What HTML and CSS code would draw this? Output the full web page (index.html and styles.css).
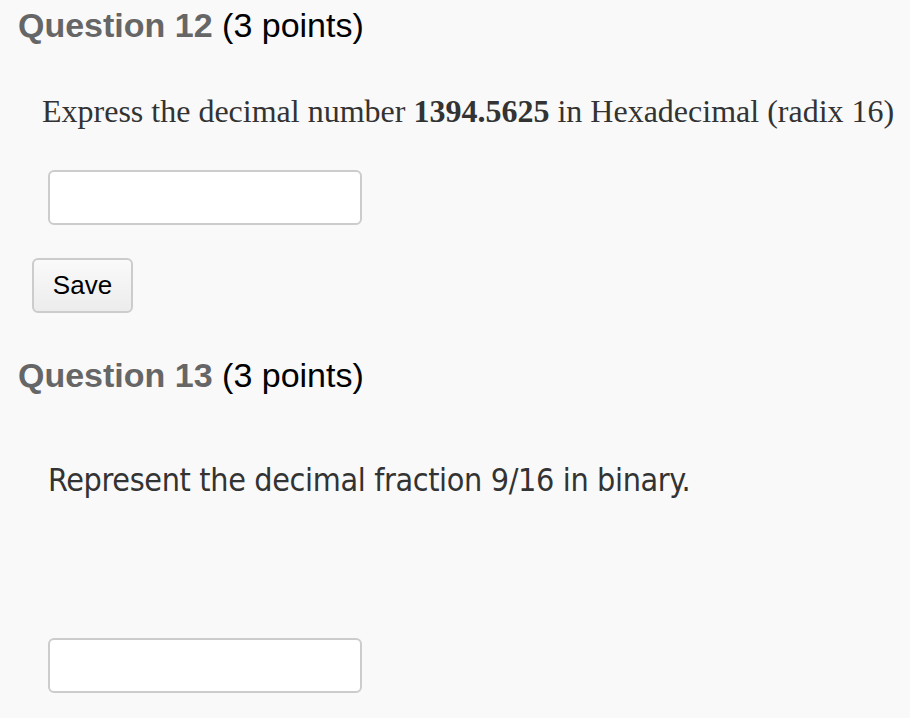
FILE: index.html
```html
<!DOCTYPE html>
<html lang="en">
<head>
  <meta charset="UTF-8">
  <meta name="viewport" content="width=device-width, initial-scale=1.0">
  <title>Quiz</title>
  <link rel="stylesheet" href="styles.css">
</head>
<body>
  <div class="quiz">
    <div class="question">
      <h2 class="q-title"><span class="q-num">Question 12</span> (3 points)</h2>
      <p class="q-text serif">Express the decimal number <strong>1394.5625</strong> in Hexadecimal (radix 16)</p>
      <input type="text" class="answer">
      <div class="actions">
        <button class="btn-save">Save</button>
      </div>
    </div>
    <div class="question">
      <h2 class="q-title"><span class="q-num">Question 13</span> (3 points)</h2>
      <p class="q-text sans">Represent the decimal fraction 9/16 in binary.</p>
      <input type="text" class="answer answer-low">
    </div>
  </div>
</body>
</html>
```

FILE: styles.css
```css
* {
  box-sizing: border-box;
}

body {
  margin: 0;
  background-color: #f9f9f9;
  color: #000;
  font-family: 'Liberation Sans', Arial, sans-serif;
}

.quiz {
  padding: 5px 0 0 18px;
}

.question + .question {
  margin-top: 42px;
}

.q-title {
  margin: 0;
  font-size: 34px;
  line-height: 40px;
  font-weight: normal;
}

.q-num {
  font-weight: bold;
  color: #666;
}

.q-text {
  margin: 0;
  color: #333;
  font-size: 34px;
  line-height: 40px;
  white-space: nowrap;
}

.q-text.serif {
  margin: 46px 0 0 24px;
  font-family: 'Liberation Serif', 'Times New Roman', serif;
  font-size: 32px;
}

.q-text.sans {
  margin: 65px 0 0 30px;
  font-family: 'DejaVu Sans Condensed', 'DejaVu Sans', sans-serif;
  font-size: 32px;
  letter-spacing: -0.35px;
}

.answer {
  display: block;
  width: 314px;
  height: 55px;
  margin: 39px 0 0 30px;
  border: 2px solid #ccc;
  border-radius: 6px;
  background-color: #fff;
  font-size: 28px;
  padding: 0 10px;
}

.answer:focus {
  outline: none;
}

.answer-low {
  margin-top: 138px;
}

.actions {
  margin: 33px 0 0 14px;
}

.btn-save {
  width: 101px;
  height: 55px;
  border: 2px solid #ccc;
  border-radius: 6px;
  background: linear-gradient(#fafafa, #ececec);
  font-family: 'Liberation Sans', Arial, sans-serif;
  font-size: 26px;
  color: #000;
  cursor: pointer;
}
```
